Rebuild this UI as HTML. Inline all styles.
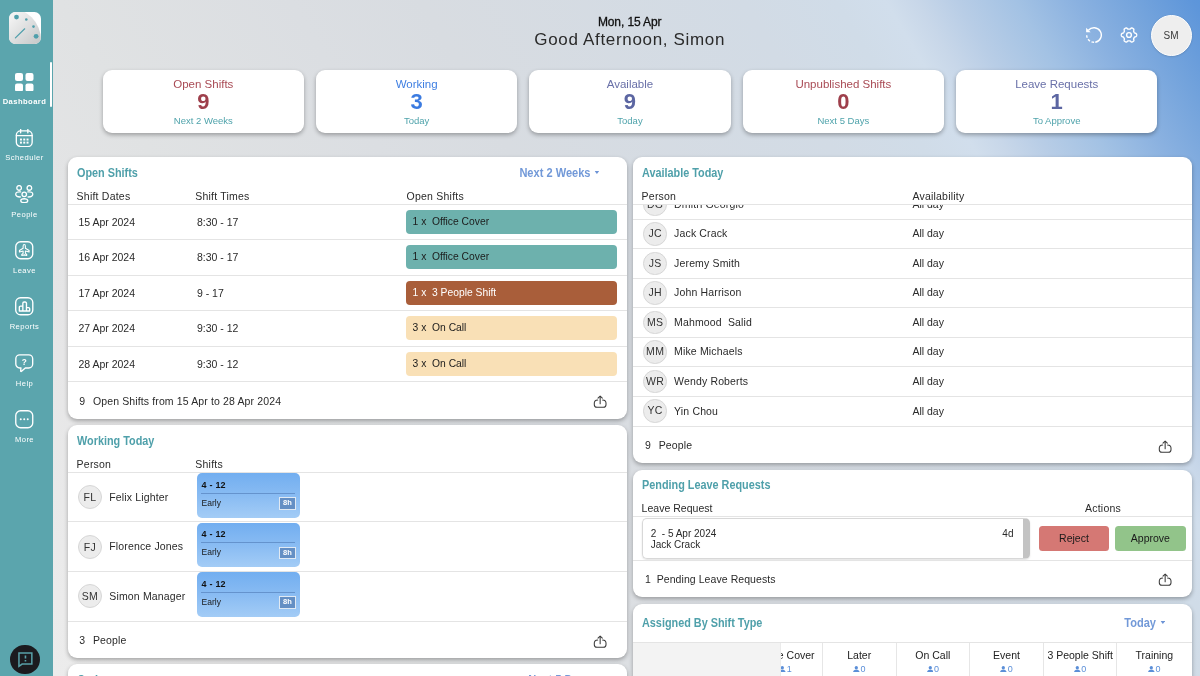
<!DOCTYPE html>
<html lang="en">
<head>
<meta charset="utf-8">
<title>Dashboard</title>
<style>
*{box-sizing:border-box;margin:0;padding:0}
html,body{width:1200px;height:676px;overflow:hidden}
body{font-family:"Liberation Sans",sans-serif;color:#222;position:relative;background:#e4e5e7}
#main{position:absolute;left:53px;top:0;width:1147px;height:676px;overflow:hidden;
 background:linear-gradient(59.16deg,#ececec 0%,#ebebeb 3.4%,#e5e5e6 14.9%,#e0e2e3 26.4%,#dbdee2 41.3%,#d8dce1 49.7%,#d2dbe5 70.5%,#d0dce8 76.5%,#d1deec 79.7%,#c8d7e9 81.7%,#b8cde6 84.3%,#a3c2e4 88.1%,#8ab1e0 92%,#73a3dc 95.9%,#5e96da 99.5%,#5c95da 100%)}
#side{position:absolute;left:0;top:0;width:53px;height:676px;background:#5ba5ad}
#root{position:absolute;left:0;top:0;width:1200px;height:676px;overflow:hidden;filter:contrast(1.0001)}
.abs{position:absolute}
/* sidebar */
.nav{position:absolute;left:0;width:49px;text-align:center;color:#fff;font-size:7.6px;line-height:9px;white-space:nowrap}
.nav svg{position:absolute;left:15px;top:0;width:18.5px;height:18.5px}
.nav span{position:absolute;left:0;width:49px;top:24.8px;display:block}
/* header */
#date{position:absolute;left:0;width:1259.4px;top:15px;text-align:center;font-size:12px;line-height:14px;color:#111;letter-spacing:-0.1px;-webkit-text-stroke:.3px #111}
#greet{position:absolute;left:0;width:1259.4px;top:30.2px;text-align:center;font-size:17px;line-height:20px;color:#2a2a2a;letter-spacing:.67px}
/* summary cards */
.sc{position:absolute;top:70.4px;width:201.2px;height:63px;background:#fff;border-radius:9px;box-shadow:0 2px 4.5px rgba(0,0,0,.3);text-align:center;white-space:nowrap}
.sc .t{position:absolute;left:0;right:0;top:7px;font-size:11.5px;line-height:14px}
.sc .n{position:absolute;left:0;right:0;top:19.7px;font-size:22px;line-height:24px;font-weight:700}
.sc .s{position:absolute;left:0;right:0;top:44.8px;font-size:9.5px;line-height:12px;color:#4fa3ab}
.red{color:#a94b55}.blue{color:#3f7fe2}.pur{color:#6970a8}
.redn{color:#9e3f4b}.bluen{color:#3b7be0}.purn{color:#5c66a2}
/* panels */
.card{position:absolute;background:#fff;border-radius:9px;box-shadow:0 2px 4.5px rgba(0,0,0,.3);overflow:hidden}
.ct{position:absolute;left:8.6px;font-size:12.5px;line-height:15px;font-weight:700;color:#4fa0aa;white-space:nowrap;transform-origin:0 50%;transform:scaleX(.868)}
.dd{position:absolute;font-size:12.5px;line-height:15px;font-weight:700;color:#7299d8;white-space:nowrap;transform-origin:100% 50%;transform:scaleX(.885)}
.th{position:absolute;font-size:10.5px;line-height:12px;color:#2a2a2a;white-space:nowrap;letter-spacing:.22px}
.td{position:absolute;font-size:10.5px;line-height:12px;color:#2a2a2a;white-space:nowrap}
.nm{letter-spacing:.15px}
.pn{margin-top:-1px}
.hl{position:absolute;left:0;right:0;height:1px;background:#e4e4e4}
.share{position:absolute;width:14px;height:15px}

.car{display:inline-block;vertical-align:2.4px;margin-left:1.2px}
.bar{position:absolute;left:338.2px;width:210.4px;height:24.2px;border-radius:4px;font-size:10.3px;line-height:24.2px;padding-left:6.4px;white-space:nowrap;color:#1c1c1c}
.bar.teal{background:#6db1ad}.bar.brown{background:#a95e3a;color:#fff}.bar.cream{background:#f9e0b6}
.av{position:absolute;width:24px;height:24px;border-radius:50%;background:#ececec;border:1px solid #d6d6d6;text-align:center;font-size:10.5px;line-height:22px;color:#333;white-space:nowrap;letter-spacing:.3px}
.sb{position:absolute;width:103.2px;height:44.6px;border-radius:5px;background:linear-gradient(180deg,#72aef0 0%,#8bbdf3 55%,#a3ccf6 100%)}
.sb b{position:absolute;left:5px;top:6.6px;font-size:9px;line-height:10px;color:#111;letter-spacing:.2px}
.sb i{position:absolute;left:4.6px;right:4.6px;top:19.6px;height:1px;background:rgba(60,100,160,.45)}
.sb span{position:absolute;left:5px;top:24.4px;font-size:8.5px;line-height:10px;color:#1a1a1a}
.sb em{position:absolute;right:4.2px;top:23.8px;width:16.4px;height:12.6px;border:1px solid rgba(255,255,255,.8);background:#648fc4;color:#fff;font-style:normal;font-weight:700;font-size:7.5px;line-height:10.6px;text-align:center}
.scroll{position:absolute;left:0;right:0;overflow:hidden}
.lv{position:absolute;border:1px solid #d8d8d8;border-right:7.5px solid #c3c3c3;border-radius:5px;box-shadow:0 1px 2px rgba(0,0,0,.12)}
.btn{position:absolute;width:70.8px;height:24.7px;border-radius:3.5px;text-align:center;font-size:10.5px;line-height:24.7px;color:#1a1a1a}
.col{position:absolute;width:73.65px;height:60px;border-right:1px solid #e6e6e6;text-align:center;white-space:nowrap}
.col.last{border-right:none}
.col .cn{position:absolute;left:0;right:0;top:6.6px;font-size:10.5px;line-height:12px;color:#222}
.col .cc{position:absolute;left:0;right:0;top:21.4px;font-size:9px;line-height:10px;color:#5b8fd8}
</style>
</head>
<body>
<div id="root">
<div id="main"></div>
<div id="date">Mon, 15 Apr</div>
<div id="greet">Good Afternoon, Simon</div>
<svg class="abs" style="left:1085px;top:26px" width="18" height="18" viewBox="0 0 18 18" fill="none" stroke="#fff" stroke-width="1.4"><path d="M3.41 4.31A7.3 7.3 0 1 1 10.27 16.19"/><path d="M10.27 16.19A7.3 7.3 0 0 1 1.73 8.36" stroke-dasharray="2.6 1.7" stroke-dashoffset="-1.2"/><path d="M1.100 1.700V6.200H5.600z" fill="#fff" stroke="none"/></svg>
<svg class="abs" style="left:1120.3px;top:26px" width="18" height="18" viewBox="0 0 18 18" fill="none" stroke="#fff" stroke-width="1.4" stroke-linejoin="round"><circle cx="9" cy="9" r="2.400"/><path d="M16.65 9.00L16.64 9.33L16.60 9.67L16.53 9.99L16.37 10.30L16.05 10.56L15.52 10.75L14.98 10.89L14.65 11.06L14.46 11.26L14.32 11.48L14.19 11.70L14.07 11.92L13.94 12.15L13.81 12.37L13.69 12.60L13.61 12.86L13.63 13.24L13.77 13.77L13.88 14.33L13.81 14.74L13.62 15.02L13.38 15.25L13.11 15.45L12.83 15.63L12.53 15.78L12.23 15.92L11.91 16.02L11.56 16.04L11.17 15.89L10.75 15.52L10.36 15.13L10.04 14.92L9.77 14.86L9.51 14.85L9.26 14.85L9.00 14.85L8.74 14.85L8.49 14.85L8.23 14.86L7.96 14.92L7.64 15.13L7.25 15.52L6.83 15.89L6.44 16.04L6.09 16.02L5.77 15.92L5.47 15.78L5.18 15.63L4.89 15.45L4.62 15.25L4.38 15.02L4.19 14.74L4.12 14.33L4.23 13.77L4.37 13.24L4.39 12.86L4.31 12.60L4.19 12.37L4.06 12.15L3.93 11.93L3.81 11.70L3.68 11.48L3.54 11.26L3.35 11.06L3.02 10.89L2.48 10.75L1.95 10.56L1.63 10.30L1.47 9.99L1.40 9.67L1.36 9.33L1.35 9.00L1.36 8.67L1.40 8.33L1.47 8.01L1.63 7.70L1.95 7.44L2.48 7.25L3.02 7.11L3.35 6.94L3.54 6.74L3.68 6.52L3.81 6.30L3.93 6.07L4.06 5.85L4.19 5.63L4.31 5.40L4.39 5.14L4.37 4.76L4.23 4.23L4.12 3.67L4.19 3.26L4.38 2.98L4.62 2.75L4.89 2.55L5.17 2.37L5.47 2.22L5.77 2.08L6.09 1.98L6.44 1.96L6.83 2.11L7.25 2.48L7.64 2.87L7.96 3.08L8.23 3.14L8.49 3.15L8.74 3.15L9.00 3.15L9.26 3.15L9.51 3.15L9.77 3.14L10.04 3.08L10.36 2.87L10.75 2.48L11.17 2.11L11.56 1.96L11.91 1.98L12.23 2.08L12.53 2.22L12.82 2.37L13.11 2.55L13.38 2.75L13.62 2.98L13.81 3.26L13.88 3.67L13.77 4.23L13.63 4.76L13.61 5.14L13.69 5.40L13.81 5.63L13.94 5.85L14.07 6.08L14.19 6.30L14.32 6.52L14.46 6.74L14.65 6.94L14.98 7.11L15.52 7.25L16.05 7.44L16.37 7.70L16.53 8.01L16.60 8.33L16.64 8.67z"/></svg>
<div class="abs" style="left:1150.5px;top:14.9px;width:41.4px;height:41.4px;border-radius:50%;background:#eeeeee;border:1.5px solid #fff;box-shadow:0 .5px 2px rgba(0,0,0,.18);text-align:center;font-size:10px;line-height:40px;color:#3a3a3a;letter-spacing:.2px">SM</div>
<div class="sc" style="left:102.70px"><div class="t red">Open Shifts</div><div class="n redn">9</div><div class="s">Next 2 Weeks</div></div>
<div class="sc" style="left:316.05px"><div class="t blue">Working</div><div class="n bluen">3</div><div class="s">Today</div></div>
<div class="sc" style="left:529.40px"><div class="t pur">Available</div><div class="n purn">9</div><div class="s">Today</div></div>
<div class="sc" style="left:742.75px"><div class="t red">Unpublished Shifts</div><div class="n redn">0</div><div class="s">Next 5 Days</div></div>
<div class="sc" style="left:956.10px"><div class="t pur">Leave Requests</div><div class="n purn">1</div><div class="s">To Approve</div></div>
<div class="card" style="left:68px;top:157px;width:558.6px;height:262px">
<div class="ct" style="top:8.5px">Open Shifts</div>
<div class="dd" style="right:27px;top:8.5px">Next 2 Weeks <svg class="car" width="5.2" height="3" viewBox="0 0 5.2 3"><path d="M0 0H5.200L2.600 2.900z" fill="#6d94d6"/></svg></div>
<div class="th" style="left:8.6px;top:33px">Shift Dates</div><div class="th" style="left:127.19999999999999px;top:33px">Shift Times</div><div class="th" style="left:338.6px;top:33px">Open Shifts</div>
<div class="hl" style="top:46.7px"></div>
<div class="td" style="left:10.4px;top:59.00px">15 Apr 2024</div><div class="td" style="left:128.9px;top:59.00px">8:30 - 17</div><div class="bar teal" style="top:52.70px">1 x&nbsp; Office Cover</div><div class="hl" style="top:82.15px"></div>
<div class="td" style="left:10.4px;top:94.45px">16 Apr 2024</div><div class="td" style="left:128.9px;top:94.45px">8:30 - 17</div><div class="bar teal" style="top:88.15px">1 x&nbsp; Office Cover</div><div class="hl" style="top:117.60px"></div>
<div class="td" style="left:10.4px;top:129.90px">17 Apr 2024</div><div class="td" style="left:128.9px;top:129.90px">9 - 17</div><div class="bar brown" style="top:123.60px">1 x&nbsp; 3 People Shift</div><div class="hl" style="top:153.05px"></div>
<div class="td" style="left:10.4px;top:165.35px">27 Apr 2024</div><div class="td" style="left:128.9px;top:165.35px">9:30 - 12</div><div class="bar cream" style="top:159.05px">3 x&nbsp; On Call</div><div class="hl" style="top:188.50px"></div>
<div class="td" style="left:10.4px;top:200.80px">28 Apr 2024</div><div class="td" style="left:128.9px;top:200.80px">9:30 - 12</div><div class="bar cream" style="top:194.50px">3 x&nbsp; On Call</div><div class="hl" style="top:223.95px"></div>
<div class="td" style="left:11.3px;top:238.0px">9</div><div class="td" style="left:24.9px;top:238.0px;letter-spacing:.13px">Open Shifts from 15 Apr to 28 Apr 2024</div>
<svg class="share" style="left:524.9px;top:236.8px" viewBox="0 0 14 15" fill="none" stroke="#3a3a3a" stroke-width="1.05" stroke-linecap="round" stroke-linejoin="round"><path d="M4.700 6C2.700 6.200 1.300 7.400 1.300 9V10.700A2.600 2.600 0 0 0 3.900 13.300H10.400A2.600 2.600 0 0 0 13 10.700V9C13 7.400 11.600 6.200 9.600 6"/><path d="M7.150 9.700V2.400M5 4.150L7.150 2L9.300 4.150"/></svg>
</div>
<div class="card" style="left:68px;top:425px;width:558.6px;height:233.3px">
<div class="ct" style="top:8.5px">Working Today</div>
<div class="th" style="left:8.6px;top:33px">Person</div><div class="th" style="left:127.3px;top:33px">Shifts</div>
<div class="hl" style="top:46.700px"></div>
<div class="av" style="left:10px;top:60.00px">FL</div><div class="td nm pn" style="left:41.3px;top:66.50px">Felix Lighter</div><div class="sb" style="left:128.6px;top:48.20px"><b>4 - 12</b><i></i><span>Early</span><em>8h</em></div><div class="hl" style="top:96.30px"></div>
<div class="av" style="left:10px;top:109.60px">FJ</div><div class="td nm pn" style="left:41.3px;top:116.10px">Florence Jones</div><div class="sb" style="left:128.6px;top:97.80px"><b>4 - 12</b><i></i><span>Early</span><em>8h</em></div><div class="hl" style="top:145.90px"></div>
<div class="av" style="left:10px;top:159.20px">SM</div><div class="td nm pn" style="left:41.3px;top:165.70px">Simon Manager</div><div class="sb" style="left:128.6px;top:147.40px"><b>4 - 12</b><i></i><span>Early</span><em>8h</em></div><div class="hl" style="top:195.50px"></div>
<div class="td" style="left:11.3px;top:209.1px">3</div><div class="td nm" style="left:24.9px;top:209.1px">People</div>
<svg class="share" style="left:524.9px;top:208.9px" viewBox="0 0 14 15" fill="none" stroke="#3a3a3a" stroke-width="1.05" stroke-linecap="round" stroke-linejoin="round"><path d="M4.700 6C2.700 6.200 1.300 7.400 1.300 9V10.700A2.600 2.600 0 0 0 3.900 13.300H10.400A2.600 2.600 0 0 0 13 10.700V9C13 7.400 11.600 6.200 9.600 6"/><path d="M7.150 9.700V2.400M5 4.150L7.150 2L9.300 4.150"/></svg>
</div>
<div class="card" style="left:68px;top:664px;width:558.6px;height:200px"><div class="ct" style="top:8.5px">On Leave</div><div class="dd" style="right:27px;top:8.5px">Next 5 Days <svg class="car" width="5.2" height="3" viewBox="0 0 5.2 3"><path d="M0 0H5.200L2.600 2.900z" fill="#6d94d6"/></svg></div></div>
<div class="card" style="left:633px;top:157.2px;width:558.8px;height:306px">
<div class="ct" style="top:8.7px">Available Today</div>
<div class="th" style="left:8.6px;top:32.8px">Person</div><div class="th" style="left:279.4px;top:32.8px">Availability</div>
<div class="scroll" style="top:47.2px;height:220.8px">
<div class="av" style="left:10.4px;top:-41.40px;width:23.5px;height:23.5px;line-height:20.5px">AB</div><div class="td nm pn" style="left:41.1px;top:-35.20px">Alice Brown</div><div class="td pn" style="left:279.4px;top:-35.20px">All day</div><div class="hl" style="top:-15.35px"></div>
<div class="av" style="left:10.4px;top:-11.85px;width:23.5px;height:23.5px;line-height:20.5px">DG</div><div class="td nm pn" style="left:41.1px;top:-5.65px">Dmitri Georgio</div><div class="td pn" style="left:279.4px;top:-5.65px">All day</div><div class="hl" style="top:14.20px"></div>
<div class="av" style="left:10.4px;top:17.70px;width:23.5px;height:23.5px;line-height:20.5px">JC</div><div class="td nm pn" style="left:41.1px;top:23.90px">Jack Crack</div><div class="td pn" style="left:279.4px;top:23.90px">All day</div><div class="hl" style="top:43.75px"></div>
<div class="av" style="left:10.4px;top:47.25px;width:23.5px;height:23.5px;line-height:20.5px">JS</div><div class="td nm pn" style="left:41.1px;top:53.45px">Jeremy Smith</div><div class="td pn" style="left:279.4px;top:53.45px">All day</div><div class="hl" style="top:73.30px"></div>
<div class="av" style="left:10.4px;top:76.80px;width:23.5px;height:23.5px;line-height:20.5px">JH</div><div class="td nm pn" style="left:41.1px;top:83.00px">John Harrison</div><div class="td pn" style="left:279.4px;top:83.00px">All day</div><div class="hl" style="top:102.85px"></div>
<div class="av" style="left:10.4px;top:106.35px;width:23.5px;height:23.5px;line-height:20.5px">MS</div><div class="td nm pn" style="left:41.1px;top:112.55px">Mahmood&nbsp; Salid</div><div class="td pn" style="left:279.4px;top:112.55px">All day</div><div class="hl" style="top:132.40px"></div>
<div class="av" style="left:10.4px;top:135.90px;width:23.5px;height:23.5px;line-height:20.5px">MM</div><div class="td nm pn" style="left:41.1px;top:142.10px">Mike Michaels</div><div class="td pn" style="left:279.4px;top:142.10px">All day</div><div class="hl" style="top:161.95px"></div>
<div class="av" style="left:10.4px;top:165.45px;width:23.5px;height:23.5px;line-height:20.5px">WR</div><div class="td nm pn" style="left:41.1px;top:171.65px">Wendy Roberts</div><div class="td pn" style="left:279.4px;top:171.65px">All day</div><div class="hl" style="top:191.50px"></div>
<div class="av" style="left:10.4px;top:195.00px;width:23.5px;height:23.5px;line-height:20.5px">YC</div><div class="td nm pn" style="left:41.1px;top:201.20px">Yin Chou</div><div class="td pn" style="left:279.4px;top:201.20px">All day</div><div class="hl" style="top:221.05px"></div>
</div>
<div class="hl" style="top:46.700px"></div>
<div class="hl" style="top:269px"></div>
<div class="td" style="left:12.1px;top:281.8px">9</div><div class="td nm" style="left:25.7px;top:281.8px">People</div>
<svg class="share" style="left:525.3px;top:281.9px" viewBox="0 0 14 15" fill="none" stroke="#3a3a3a" stroke-width="1.05" stroke-linecap="round" stroke-linejoin="round"><path d="M4.700 6C2.700 6.200 1.300 7.400 1.300 9V10.700A2.600 2.600 0 0 0 3.900 13.300H10.400A2.600 2.600 0 0 0 13 10.700V9C13 7.400 11.600 6.200 9.600 6"/><path d="M7.150 9.700V2.400M5 4.150L7.150 2L9.300 4.150"/></svg>
</div>
<div class="card" style="left:633px;top:469.7px;width:558.8px;height:127.1px">
<div class="ct" style="top:8.3px">Pending Leave Requests</div>
<div class="hl" style="top:46.3px"></div>
<div class="th" style="left:8.6px;top:32.8px;letter-spacing:.02px">Leave Request</div><div class="th" style="left:452.0px;top:32.8px">Actions</div>
<div class="lv" style="left:8.7px;top:48.3px;width:388.3px;height:41px"><div class="td" style="left:8px;top:8.6px;font-size:10px;line-height:11px">2&nbsp; - 5 Apr 2024<br>Jack Crack</div><div class="td" style="right:9.5px;top:8.6px;font-size:10px;line-height:11px">4d</div></div>
<div class="btn" style="left:405.6px;top:56.5px;background:#d57874">Reject</div><div class="btn" style="left:482.0px;top:56.5px;background:#92c48a">Approve</div>
<div class="hl" style="top:90.3px"></div>
<div class="td" style="left:12.1px;top:102.9px">1</div><div class="td nm" style="left:23.7px;top:102.9px;letter-spacing:.07px">Pending Leave Requests</div>
<svg class="share" style="left:524.7px;top:102.2px" viewBox="0 0 14 15" fill="none" stroke="#3a3a3a" stroke-width="1.05" stroke-linecap="round" stroke-linejoin="round"><path d="M4.700 6C2.700 6.200 1.300 7.400 1.300 9V10.700A2.600 2.600 0 0 0 3.900 13.300H10.400A2.600 2.600 0 0 0 13 10.700V9C13 7.400 11.600 6.200 9.600 6"/><path d="M7.150 9.700V2.400M5 4.150L7.150 2L9.300 4.150"/></svg>
</div>
<div class="card" style="left:633px;top:603.5px;width:558.8px;height:200px">
<div class="ct" style="top:12.1px">Assigned By Shift Type</div>
<div class="dd" style="right:27px;top:12.1px">Today <svg class="car" width="5.2" height="3" viewBox="0 0 5.2 3"><path d="M0 0H5.200L2.600 2.900z" fill="#6d94d6"/></svg></div>
<div class="hl" style="top:38.6px;background:#e4e4e4"></div>
<div class="col" style="left:116.2px;top:39.1px"><div class="cn">Office Cover</div><div class="cc"><svg width="6.6" height="6.6" viewBox="0 0 6 6" fill="#5b8fd8" style="vertical-align:-0.2px;margin-right:.8px"><circle cx="3" cy="1.600" r="1.500"/><path d="M0 6C0 4 1.300 3.400 3 3.400S6 4 6 6z"/></svg>1</div></div>
<div class="col" style="left:189.9px;top:39.1px"><div class="cn">Later</div><div class="cc"><svg width="6.6" height="6.6" viewBox="0 0 6 6" fill="#5b8fd8" style="vertical-align:-0.2px;margin-right:.8px"><circle cx="3" cy="1.600" r="1.500"/><path d="M0 6C0 4 1.300 3.400 3 3.400S6 4 6 6z"/></svg>0</div></div>
<div class="col" style="left:263.5px;top:39.1px"><div class="cn">On Call</div><div class="cc"><svg width="6.6" height="6.6" viewBox="0 0 6 6" fill="#5b8fd8" style="vertical-align:-0.2px;margin-right:.8px"><circle cx="3" cy="1.600" r="1.500"/><path d="M0 6C0 4 1.300 3.400 3 3.400S6 4 6 6z"/></svg>0</div></div>
<div class="col" style="left:337.2px;top:39.1px"><div class="cn">Event</div><div class="cc"><svg width="6.6" height="6.6" viewBox="0 0 6 6" fill="#5b8fd8" style="vertical-align:-0.2px;margin-right:.8px"><circle cx="3" cy="1.600" r="1.500"/><path d="M0 6C0 4 1.300 3.400 3 3.400S6 4 6 6z"/></svg>0</div></div>
<div class="col" style="left:410.8px;top:39.1px"><div class="cn">3 People Shift</div><div class="cc"><svg width="6.6" height="6.6" viewBox="0 0 6 6" fill="#5b8fd8" style="vertical-align:-0.2px;margin-right:.8px"><circle cx="3" cy="1.600" r="1.500"/><path d="M0 6C0 4 1.300 3.400 3 3.400S6 4 6 6z"/></svg>0</div></div>
<div class="col last" style="left:484.5px;top:39.1px"><div class="cn">Training</div><div class="cc"><svg width="6.6" height="6.6" viewBox="0 0 6 6" fill="#5b8fd8" style="vertical-align:-0.2px;margin-right:.8px"><circle cx="3" cy="1.600" r="1.500"/><path d="M0 6C0 4 1.300 3.400 3 3.400S6 4 6 6z"/></svg>0</div></div>
<div class="abs" style="left:0;top:39.1px;width:148.0px;height:60px;background:#f3f3f3;border-right:1px solid #ebebeb"></div>
</div>
<div id="side">
<!-- logo -->
<svg class="abs" style="left:9px;top:12.3px" width="32" height="32" viewBox="0 0 32 32">
 <defs><linearGradient id="lg" x1="0" y1="0" x2="1" y2="1"><stop offset="0" stop-color="#ffffff"/><stop offset=".35" stop-color="#f1f1f1"/><stop offset="1" stop-color="#aeb1b2"/></linearGradient><clipPath id="lc"><rect x="0" y="0" width="32" height="32" rx="6.5"/></clipPath></defs>
 <rect x="0" y="0" width="32" height="32" rx="6.5" fill="#fff"/>
 <circle cx="0" cy="28" r="32" fill="url(#lg)" clip-path="url(#lc)"/>
 <circle cx="7.5" cy="5.1" r="2.4" fill="#4f9fab"/>
 <circle cx="17.3" cy="7.5" r="1.3" fill="#4f9fab"/>
 <circle cx="24.5" cy="14.6" r="1.3" fill="#4f9fab"/>
 <circle cx="27.1" cy="24.3" r="2.4" fill="#4f9fab"/>
 <path d="M6.4 25.900 L15.700 16.800" stroke="#4f9fab" stroke-width="1.200" stroke-linecap="round" fill="none"/>
</svg>
<div class="abs" style="left:49.6px;top:62px;width:2.4px;height:45px;background:#fff;border-radius:1px"></div>
<div class="nav" style="top:72.5px;font-weight:700"><svg viewBox="0 0 18 18"><rect x="0" y="0" width="7.8" height="7.8" rx="2" fill="#fff"/><rect x="10.2" y="0" width="7.8" height="7.8" rx="2" fill="#fff"/><rect x="0" y="10.2" width="7.8" height="7.8" rx="2" fill="#fff"/><rect x="10.2" y="10.2" width="7.8" height="7.8" rx="2" fill="#fff"/></svg><span style="letter-spacing:.45px">Dashboard</span></div>
<div class="nav" style="top:128.5px"><svg viewBox="0 0 18 18" fill="none" stroke="#fff" stroke-width="1.3" stroke-linecap="round"><rect x="1.300" y="1.900" width="15.400" height="15.200" rx="4.200"/><path d="M1.300 6.400H16.700M5.500 .3V3.700M12.500 .3V3.700"/><g stroke="none" fill="#fff"><rect x="4.850" y="9.300" width="1.900" height="1.900"/><rect x="8.050" y="9.300" width="1.900" height="1.900"/><rect x="11.250" y="9.300" width="1.900" height="1.900"/><rect x="4.850" y="12.300" width="1.900" height="1.900"/><rect x="8.050" y="12.300" width="1.900" height="1.900"/><rect x="11.250" y="12.300" width="1.900" height="1.900"/></g></svg><span style="letter-spacing:.5px">Scheduler</span></div>
<div class="nav" style="top:184.8px"><svg viewBox="0 0 18.4 18.4" fill="none" stroke="#fff" stroke-width="1.3" stroke-linecap="round"><circle cx="4.100" cy="2.900" r="2.300"/><circle cx="14.300" cy="2.900" r="2.300"/><circle cx="9.200" cy="9.300" r="2.250"/><path d="M5.600 6.800C2.500 6.500 .7 7.400 .7 9.300S2.600 12 5.400 11.900M12.800 6.800C15.900 6.500 17.700 7.400 17.700 9.300S15.800 12 13 11.900"/><ellipse cx="9.200" cy="15.600" rx="3.500" ry="1.950"/></svg><span style="letter-spacing:.45px">People</span></div>
<div class="nav" style="top:241px"><svg viewBox="0 0 18 18" fill="none" stroke="#fff" stroke-width="1.3" stroke-linecap="round" stroke-linejoin="round"><rect x=".75" y=".75" width="16.5" height="16.5" rx="4.700"/><path d="M9 3.4c.7 0 1.1.7 1.1 1.6v2l3.6 2.3v1.4l-3.6-1v2.3l1.3 1v1.1L9 13.5l-2.4.6V13l1.3-1V9.7l-3.6 1V9.3L7.9 7V5c0-.9.4-1.6 1.1-1.6z" stroke-width="1.05"/></svg><span style="letter-spacing:.45px">Leave</span></div>
<div class="nav" style="top:297.4px"><svg viewBox="0 0 18.4 18.4" fill="none" stroke="#fff" stroke-width="1.35" stroke-linecap="round" stroke-linejoin="round"><rect x=".7" y=".7" width="17" height="17" rx="4.800"/><path d="M4.300 13.900V10.300a1.200 1.200 0 0 1 1.200-1.200h2.300M7.800 13.900V6.200a1.200 1.200 0 0 1 1.200-1.200h1.200a1.200 1.200 0 0 1 1.200 1.200v7.700M11.400 10.500h2a1.200 1.200 0 0 1 1.200 1.200v2.200M4.300 13.900h10.300"/></svg><span style="letter-spacing:.45px">Reports</span></div>
<div class="nav" style="top:354px"><svg viewBox="0 0 18 18" fill="none" stroke="#fff" stroke-width="1.3" stroke-linecap="round" stroke-linejoin="round"><path d="M4.6 .8h8.8a3.8 3.8 0 0 1 3.8 3.8v5.2a3.8 3.8 0 0 1-3.8 3.8H10l-3.6 3.2c-.5.4-1 .1-.9-.5l.3-2.7H4.6A3.8 3.8 0 0 1 .8 9.800V4.600A3.8 3.8 0 0 1 4.600 .8z"/><text x="9" y="10.3" font-family="Liberation Sans,sans-serif" font-size="8" font-weight="700" fill="#fff" stroke="none" text-anchor="middle">?</text></svg><span style="letter-spacing:.45px">Help</span></div>
<div class="nav" style="top:410.2px"><svg viewBox="0 0 18 18" fill="none" stroke="#fff" stroke-width="1.3"><rect x=".75" y=".75" width="16.5" height="16.5" rx="4.700"/><g fill="#fff" stroke="none"><circle cx="5.6" cy="9" r=".95"/><circle cx="9" cy="9" r=".95"/><circle cx="12.4" cy="9" r=".95"/></g></svg><span style="letter-spacing:.45px">More</span></div>
<!-- feedback -->
<div class="abs" style="left:10.2px;top:644.6px;width:29.6px;height:29.6px;border-radius:50%;background:#1b1b1f"></div>
<svg class="abs" style="left:17.5px;top:652px" width="16" height="16" viewBox="0 0 16 16" fill="none" stroke="#58a0a8" stroke-width="1.5" stroke-linejoin="miter"><path d="M.95 1.050H13.850V12.050H4.100L.95 14.300z"/><path d="M7.450 3.400v3.200M7.450 8v1.400" stroke-width="1.600"/></svg>
</div>
</div>
</body>
</html>
